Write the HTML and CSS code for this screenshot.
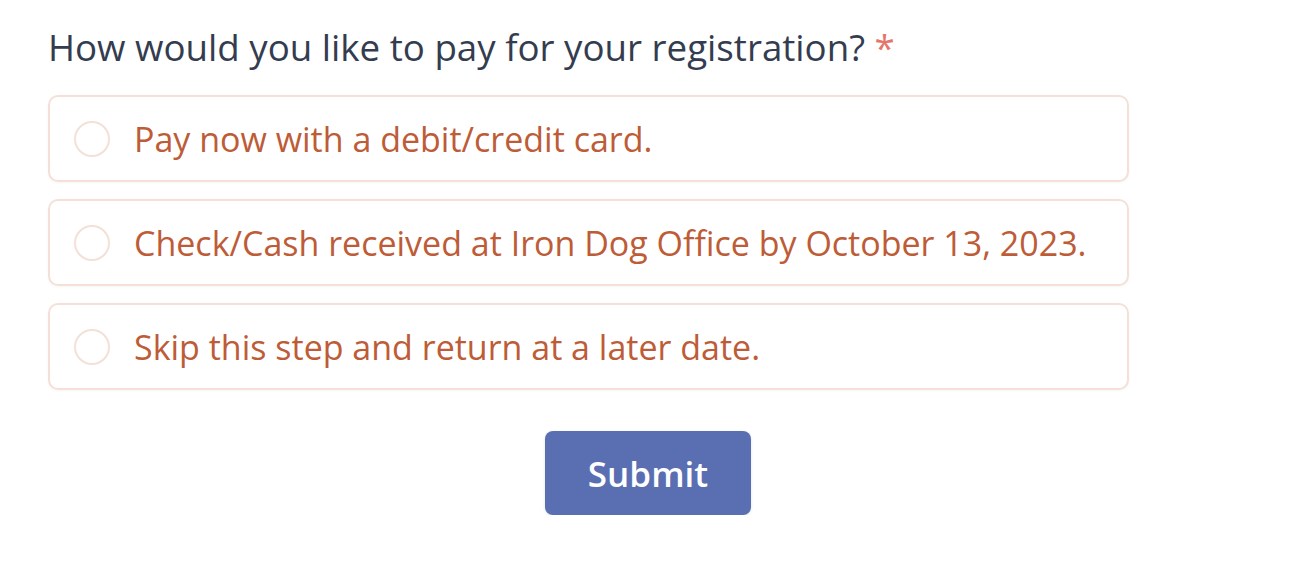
FILE: index.html
```html
<!DOCTYPE html>
<html lang="en">
<head>
<meta charset="utf-8">
<title>Payment</title>
<link rel="stylesheet" href="styles.css">
</head>
<body>
<form class="form">
  <fieldset class="question">
    <legend class="label">How would you like to pay for your registration? <span class="req">*</span></legend>
    <div class="options">
      <label class="option"><input type="radio" name="pay" class="radio"><span class="text">Pay now with a debit/credit card.</span></label>
      <label class="option"><input type="radio" name="pay" class="radio"><span class="text">Check/Cash received at Iron Dog Office by October 13, 2023.</span></label>
      <label class="option"><input type="radio" name="pay" class="radio"><span class="text">Skip this step and return at a later date.</span></label>
    </div>
  </fieldset>
  <div class="actions">
    <button type="button" class="submit">Submit</button>
  </div>
</form>
</body>
</html>
```
FILE: styles.css
```css
* { box-sizing: border-box; }
html, body { margin: 0; padding: 0; background: #fff; }
body { font-family: "Open Sans", "Noto Sans", sans-serif; }
.form { padding-top: 24px; }
.question { border: 0; margin: 0 0 0 48px; padding: 0; width: 1081px; }
.label { padding: 0; font-size: 36.7px; line-height: 47px; color: #343c4f; margin-bottom: 24px; }
.req { color: #e5756b; }
.options { display: flex; flex-direction: column; gap: 17px; }
.option {
  display: flex; align-items: center; height: 87px;
  border: 2px solid #f4e0d7; border-radius: 10px;
  padding-left: 24px; gap: 24px; padding-top: 1px;
  box-shadow: 0 1px 3px rgba(0,0,0,0.04);
  cursor: pointer;
}
.radio {
  appearance: none; -webkit-appearance: none; margin: 0;
  width: 36px; height: 36px; border-radius: 50%;
  border: 2px solid #f4e0d7; background: #fff; flex: none;
}
.text { font-size: 34px; color: #bd5c37; }
.actions { display: flex; justify-content: center; padding-top: 41px; padding-right: 2px; }
.submit {
  font-family: inherit; font-size: 35px; font-weight: 600; color: #fff;
  background: #5a6fb1; border: 0; border-radius: 8px;
  width: 206px; height: 84px;
  box-shadow: 0 1px 3px rgba(0,0,0,0.12);
}
```
